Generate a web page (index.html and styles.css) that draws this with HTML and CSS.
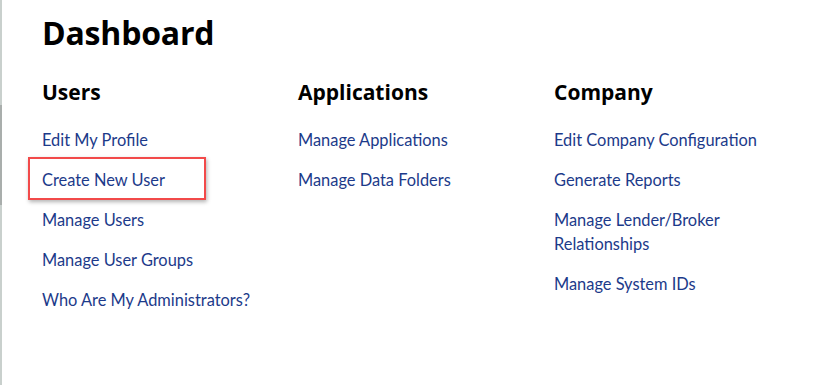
FILE: index.html
```html
<!DOCTYPE html>
<html lang="en">
<head>
<meta charset="utf-8">
<title>Dashboard</title>
<link rel="stylesheet" href="styles.css">
</head>
<body>
<div class="frame">
  <div class="edge"><div class="edge-thumb"></div></div>
  <main class="page">
    <h1 class="title">Dashboard</h1>
    <div class="columns">
      <section class="col">
        <h2 class="col-title">Users</h2>
        <ul class="links">
          <li><a href="#">Edit My Profile</a></li>
          <li class="highlight"><a href="#">Create New User</a></li>
          <li><a href="#">Manage Users</a></li>
          <li><a href="#">Manage User Groups</a></li>
          <li><a href="#">Who Are My Administrators?</a></li>
        </ul>
      </section>
      <section class="col">
        <h2 class="col-title">Applications</h2>
        <ul class="links">
          <li><a href="#">Manage Applications</a></li>
          <li><a href="#">Manage Data Folders</a></li>
        </ul>
      </section>
      <section class="col">
        <h2 class="col-title">Company</h2>
        <ul class="links">
          <li><a href="#">Edit Company Configuration</a></li>
          <li><a href="#">Generate Reports</a></li>
          <li class="narrow"><a href="#">Manage Lender/Broker Relationships</a></li>
          <li><a href="#">Manage System IDs</a></li>
        </ul>
      </section>
    </div>
  </main>
</div>
</body>
</html>
```
FILE: styles.css
```css
* { box-sizing: border-box; }
html, body { margin: 0; padding: 0; background: #ffffff; }
body { width: 833px; height: 385px; overflow: hidden; }
.frame { display: flex; height: 385px; }
.edge { width: 2px; background: #c9d0cd; display: flex; flex-direction: column; }
.edge-thumb { margin-top: 105px; height: 100px; background: #a9aeac; }
.page { flex: 1; padding: 11px 0 0 40px; }
.title {
  margin: 0;
  font-family: "Open Sans", sans-serif;
  font-weight: 700;
  font-size: 32px;
  line-height: 44px;
  color: #000;
  letter-spacing: -0.2px;
}
.columns { display: flex; margin-top: 23px; }
.col { width: 256px; }
.col-title {
  margin: 0 0 22px 0;
  font-family: "Open Sans", sans-serif;
  font-weight: 700;
  font-size: 21px;
  line-height: 28px;
  color: #000;
}
.links { list-style: none; margin: 0; padding: 0; display: flex; flex-direction: column; gap: 16px; }
.links li { font-family: "Lato", sans-serif; font-size: 16.4px; line-height: 24px; position: relative; }
.links a { color: #1c3a8a; text-decoration: none; }
.narrow { max-width: 200px; }
.highlight::after {
  content: "";
  position: absolute;
  left: -14px; top: -11px;
  width: 174px; height: 39px;
  border: 2px solid #f24a4a;
  box-shadow: 1px 2px 4px rgba(0,0,0,0.3);
  pointer-events: none;
}
```
